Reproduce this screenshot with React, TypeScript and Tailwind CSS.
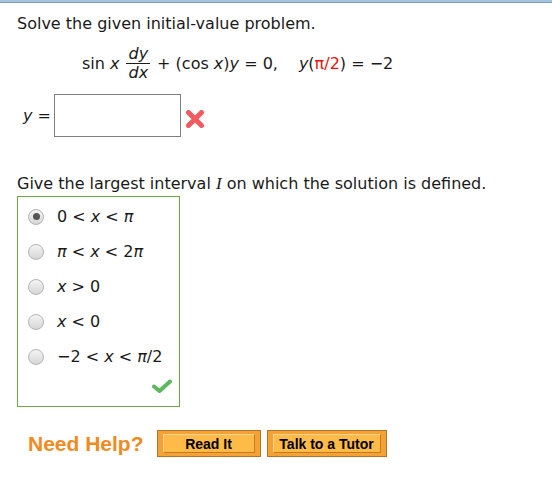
import React from 'react';

const I = ({ children }: { children: React.ReactNode }) => <i className="italic">{children}</i>;

const Radio = ({ checked }: { checked?: boolean }) => (
  <span className="flex h-[16px] w-[16px] items-center justify-center rounded-full border border-[#b4b4b4] bg-gradient-to-b from-[#f4f4f4] to-[#d6d6d6]">
    {checked && <span className="h-[7px] w-[7px] rounded-full bg-[#555]" />}
  </span>
);

const HelpButton = ({ label }: { label: string }) => (
  <button className="h-[27px] w-full border border-[#b8732a] bg-[#f5a235] px-[5px] py-[3px]">
    <span className="flex h-full items-center justify-center whitespace-nowrap border-t border-l border-b border-r border-t-[#ffd49a] border-l-[#ffd49a] border-b-[#c97a20] border-r-[#c97a20] bg-[#ffbb48] font-['Liberation_Sans',Arial,sans-serif] text-[14px] font-bold leading-none text-black">
      {label}
    </span>
  </button>
);

const options: React.ReactNode[] = [
  <>0 &lt; <I>x</I> &lt; <I>π</I></>,
  <><I>π</I> &lt; <I>x</I> &lt; 2<I>π</I></>,
  <><I>x</I> &gt; 0</>,
  <><I>x</I> &lt; 0</>,
  <>−2 &lt; <I>x</I> &lt; <I>π</I>/2</>,
];

export default function App() {
  return (
    <div className="h-[489px] w-[552px] overflow-hidden bg-white font-['DejaVu_Sans',Verdana,sans-serif] text-[16px] text-[#1a1a1a]">
      <div className="h-[3px] border-b border-[#7d9dbd] bg-[#a6c3df]" />

      <div className="pl-[17px]">
        <p className="mt-[11px] leading-[20px]">Solve the given initial-value problem.</p>

        <div className="mt-[11px] ml-[65px] flex items-center">
          <span>sin <I>x</I></span>
          <span className="ml-[7px] flex flex-col items-center leading-[18px]">
            <span className="px-[2px]"><I>dy</I></span>
            <span className="h-px w-full bg-[#1a1a1a]" />
            <span className="px-[2px]"><I>dx</I></span>
          </span>
          <span className="ml-[7px]">+ (cos <I>x</I>)<I>y</I> = 0,</span>
          <span className="ml-[21px]">
            <I>y</I>(<span className="text-[#e8120c]">π/2</span>) = −2
          </span>
        </div>

        <div className="mt-[12px] flex items-center">
          <span className="ml-[6px] w-[31px]"><I>y</I> =</span>
          <div className="h-[43px] w-[127px] border border-[#808080] bg-white" />
          <svg className="ml-[4px] mt-[7px]" width="20" height="18" viewBox="0 0 20 18">
            <path d="M3.5 2.5 L16.5 15.5 M16.5 2.5 L3.5 15.5" stroke="#f25a60" strokeWidth="5" strokeLinecap="round" />
          </svg>
        </div>

        <p className="mt-[37px] leading-[20px]">
          Give the largest interval <i className="font-['Liberation_Serif',serif] text-[17px]">I</i> on which the solution is defined.
        </p>

        <div className="mt-[2px] w-[163px] border border-[#6fa544] pt-[2px] pr-[7px] pb-[13px] pl-[10px]">
          {options.map((opt, i) => (
            <div key={i} className="flex h-[35px] items-center">
              <Radio checked={i === 0} />
              <span className="ml-[13px] whitespace-nowrap">{opt}</span>
            </div>
          ))}
          <div className="mt-[5px] flex justify-end">
            <svg width="20" height="14" viewBox="0 0 20 14">
              <path d="M2 7.5 L7.5 12 L18 2.5" fill="none" stroke="#5cb85c" strokeWidth="4" strokeLinejoin="round" strokeLinecap="round" />
            </svg>
          </div>
        </div>

        <div className="mt-[21px] ml-[11px] flex items-center gap-[6px]">
          <span className="mr-[7px] font-['Liberation_Sans',Arial,sans-serif] text-[21px] font-bold text-[#f28a1e]">Need Help?</span>
          <div className="w-[104px]"><HelpButton label="Read It" /></div>
          <div className="w-[120px]"><HelpButton label="Talk to a Tutor" /></div>
        </div>
      </div>
    </div>
  );
}
